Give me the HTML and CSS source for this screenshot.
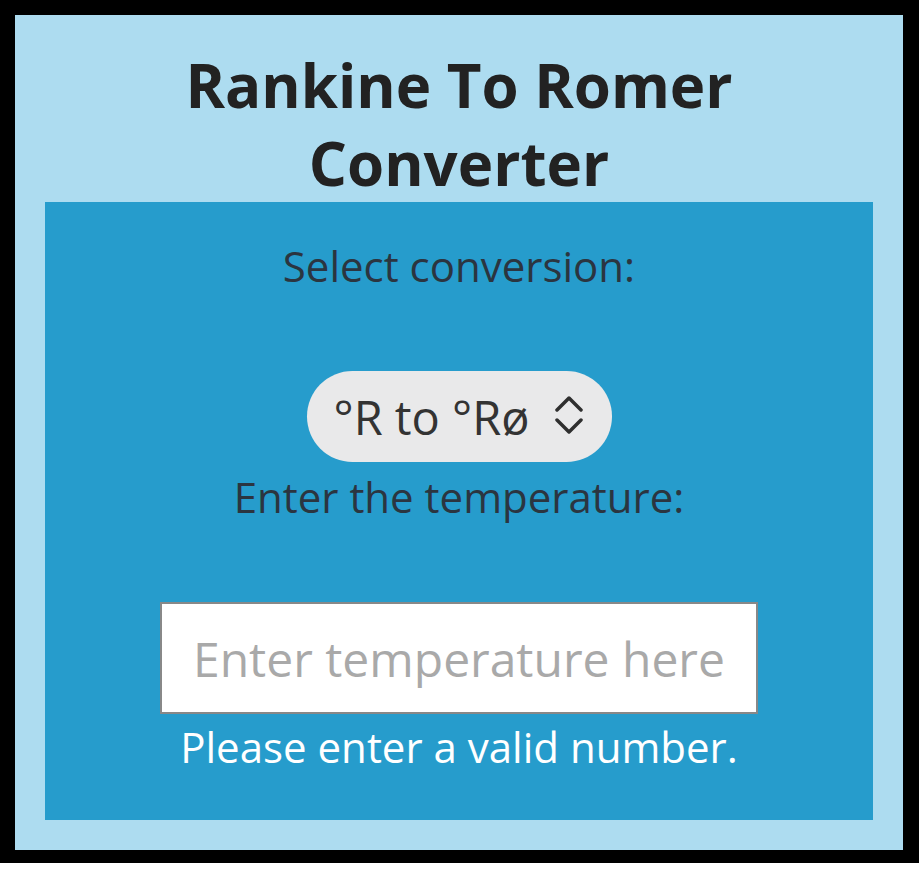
FILE: index.html
```html
<!DOCTYPE html>
<html lang="en">
<head>
  <meta charset="UTF-8">
  <title>Rankine To Romer Converter</title>
  <link rel="stylesheet" href="styles.css">
</head>
<body>
  <div class="frame">
    <h1>Rankine To Romer Converter</h1>

    <div class="converter">
      <label class="label" for="conversion">Select conversion:</label>
      <div class="select-wrap">
        <select id="conversion" class="select">
          <option value="r-ro">°R to °Rø</option>
          <option value="ro-r">°Rø to °R</option>
        </select>
        <svg class="chevrons" width="30" height="38" viewBox="0 0 30 38" fill="none" stroke="#2f2f2f" stroke-width="3.5" stroke-linecap="round" stroke-linejoin="round">
          <path d="M3 14 L15 2 L27 14"/>
          <path d="M3 24 L15 36 L27 24"/>
        </svg>
      </div>

      <label class="label" for="temp">Enter the temperature:</label>
      <input type="text" id="temp" class="temp" placeholder="Enter temperature here">
      <p class="error">Please enter a valid number.</p>
    </div>
  </div>
</body>
</html>
```

FILE: styles.css
```css
body {
  margin: 0;
  font-family: 'Open Sans', 'Noto Sans', sans-serif;
  background: #fff;
}

.frame {
  border: 15px solid #000;
  border-right-width: 16px;
  border-bottom-width: 13px;
  background: #addcf0;
  padding: 0 30px 30px;
}

h1 {
  margin: 0;
  padding: 31px 120px 0;
  text-align: center;
  color: #222;
  font-size: 60px;
  line-height: 78px;
  font-weight: 700;
}

.converter {
  background: #269ccc;
  display: flex;
  flex-direction: column;
  align-items: center;
  padding: 35px 0 44px;
}

.label {
  color: #2b3540;
  font-size: 42px;
  line-height: 58px;
}

.select-wrap {
  position: relative;
  margin: 76px 0 6px;
}

.select {
  display: block;
  appearance: none;
  -webkit-appearance: none;
  background: #e9e9ea;
  border: none;
  border-radius: 46px;
  height: 91px;
  width: 305px;
  padding: 0 0 0 27px;
  font-family: 'Open Sans', 'Noto Sans', sans-serif;
  font-size: 47px;
  color: #333;
}

.chevrons {
  position: absolute;
  left: 247px;
  top: 25px;
  pointer-events: none;
}

.temp {
  margin-top: 76px;
  width: 598px;
  height: 112px;
  box-sizing: border-box;
  border: 2px solid #888;
  background: #fff;
  padding: 0 31px;
  font-family: 'Open Sans', 'Noto Sans', sans-serif;
  font-size: 48px;
  color: #333;
}

.temp::placeholder {
  color: #a9a9a9;
}

.error {
  margin: 4px 0 0;
  color: #fff;
  font-size: 42px;
  line-height: 58px;
}
```
